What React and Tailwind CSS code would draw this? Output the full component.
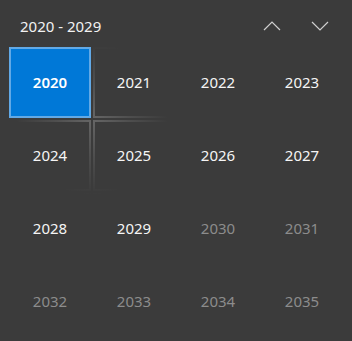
import React from "react";

const years = [
  [2020, true], [2021, true], [2022, true], [2023, true],
  [2024, true], [2025, true], [2026, true], [2027, true],
  [2028, true], [2029, true], [2030, false], [2031, false],
  [2032, false], [2033, false], [2034, false], [2035, false],
];

function Chevron({ up }) {
  return (
    <svg width="18" height="10" viewBox="0 0 18 10" fill="none">
      <path
        d={up ? "M1 9 L9 1 L17 9" : "M1 1 L9 9 L17 1"}
        stroke="#cfcfcf"
        strokeWidth="1.2"
      />
    </svg>
  );
}

export default function App() {
  return (
    <div
      className="w-[352px] h-[341px] bg-[#3b3b3b] overflow-hidden"
      style={{ fontFamily: '"Noto Sans", "Open Sans", sans-serif' }}
    >
      <div className="h-[47px] flex items-center justify-between pl-5 pr-2 pt-[5px]">
        <span className="text-[15px] text-[#f2f2f2] leading-none">2020 - 2029</span>
        <div className="flex">
          <div className="w-12 h-[40px] flex items-center justify-center">
            <Chevron up />
          </div>
          <div className="w-12 h-[40px] flex items-center justify-center">
            <Chevron />
          </div>
        </div>
      </div>
      <div className="grid grid-cols-[repeat(4,82px)] grid-rows-[repeat(4,71px)] gap-[2px] px-[9px]">
        {years.map(([y, inScope], i) =>
          i === 0 ? (
            <div
              key={y}
              className="border-2 border-[#62a9e6] bg-[#0078d7] flex items-center justify-center text-[15px] font-semibold text-white"
            >
              {y}
            </div>
          ) : (
            <div
              key={y}
              className={
                "border-2 border-transparent flex items-center justify-center text-[15px] [background:linear-gradient(#3b3b3b,#3b3b3b)_padding-box,radial-gradient(circle_at_92px_119px,rgba(255,255,255,0.22),rgba(255,255,255,0.1)_36px,transparent_76px)_fixed_border-box] " +
                (inScope ? "text-[#f5f5f5]" : "text-[#8c8c8c]")
              }
            >
              {y}
            </div>
          )
        )}
      </div>
    </div>
  );
}
